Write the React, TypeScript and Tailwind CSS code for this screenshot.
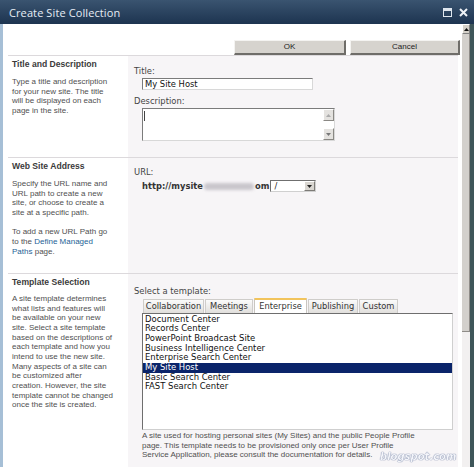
import React from "react";

const VER = "font-['DejaVu_Sans',Verdana,sans-serif]";
const TAH = "font-['Liberation_Sans',Arial,sans-serif]";

function TitleBar() {
  return (
    <div className="h-[24px] flex items-center justify-between bg-gradient-to-b from-[#3a5470] to-[#1d3450] pl-[9px] pr-[6px]">
      <span className="font-['Open_Sans',sans-serif] text-[11px] text-[#e6edf5] leading-none tracking-[0.1px]">
        Create Site Collection
      </span>
      <div className="flex items-center gap-[7px]">
        <svg width="9" height="9" viewBox="0 0 9 9">
          <rect x="0.5" y="0.5" width="8" height="8" fill="none" stroke="#dfe6ee" strokeWidth="1" />
          <rect x="0.5" y="0.5" width="8" height="2.5" fill="#dfe6ee" />
        </svg>
        <svg width="9" height="9" viewBox="0 0 9 9">
          <path d="M1 1 L8 8 M8 1 L1 8" stroke="#eef2f6" strokeWidth="2" />
        </svg>
      </div>
    </div>
  );
}

function Btn({ label, w }: { label: string; w: string }) {
  return (
    <div
      className={`${w} h-[15px] flex items-center justify-center bg-[#d6d3ce] border-t border-l border-t-[#f4f3f1] border-l-[#f4f3f1] border-b-2 border-r-2 border-b-[#6f6d69] border-r-[#6f6d69] ${TAH} text-[8px] text-[#222]`}
    >
      {label}
    </div>
  );
}

function Section({
  h,
  left,
  right,
}: {
  h: string;
  left: React.ReactNode;
  right: React.ReactNode;
}) {
  return (
    <div className={`flex border-t border-[#dcd9dc] ${h} shrink-0`}>
      <div className="w-[120px] bg-white pl-[4px] pr-[3px]">{left}</div>
      <div className="flex-1 bg-[#f7f5f7] pl-[6px]">{right}</div>
    </div>
  );
}

function Heading({ children }: { children: React.ReactNode }) {
  return (
    <div className={`pt-[3px] ${TAH} font-bold text-[8.6px] leading-[10px] text-[#3b3b3b]`}>{children}</div>
  );
}

function Desc({ children, cls = "" }: { children: React.ReactNode; cls?: string }) {
  return <div className={`${TAH} text-[8px] leading-[9.65px] text-[#505050] ${cls}`}>{children}</div>;
}

function Label({ children, cls = "" }: { children: React.ReactNode; cls?: string }) {
  return <div className={`${VER} text-[8.4px] leading-[10px] text-[#444] ${cls}`}>{children}</div>;
}

const items = [
  "Document Center",
  "Records Center",
  "PowerPoint Broadcast Site",
  "Business Intelligence Center",
  "Enterprise Search Center",
  "My Site Host",
  "Basic Search Center",
  "FAST Search Center",
];

const tabs = [
  { t: "Collaboration", w: "w-[61px]" },
  { t: "Meetings", w: "w-[48px]" },
  { t: "Enterprise", w: "w-[53px]", sel: true },
  { t: "Publishing", w: "w-[50px]" },
  { t: "Custom", w: "w-[39px]" },
];

export default function App() {
  return (
    <div className="w-[474px] h-[467px] overflow-hidden relative bg-white flex flex-col">
      <TitleBar />
      <div className="flex flex-1 min-h-0">
        <div className="w-[3px] bg-[#a6bfd6] shrink-0" />
        <div className="flex-1 flex flex-col min-w-0 bg-white">
          <div className="h-[31px] shrink-0 flex items-end justify-end gap-[4px] pr-[2px]">
            <Btn label="OK" w="w-[112px]" />
            <Btn label="Cancel" w="w-[110px]" />
          </div>
          <div className="ml-[5px] mr-[4px] flex flex-col flex-1 min-h-0">
            <Section
              h="h-[102px]"
              left={
                <>
                  <Heading>Title and Description</Heading>
                  <Desc cls="mt-[8px]">
                    Type a title and description
                    <br />
                    for your new site. The title
                    <br />
                    will be displayed on each
                    <br />
                    page in the site.
                  </Desc>
                </>
              }
              right={
                <>
                  <Label cls="pt-[10px]">Title:</Label>
                  <div className="mt-[2px] ml-[8px] w-[171px] h-[12px] bg-white border border-[#7b7b7b] border-b-[#d8d8d8] border-r-[#d8d8d8] flex items-center pl-[2px]">
                    <span className={`${VER} text-[8.4px] leading-none text-[#111]`}>My Site Host</span>
                  </div>
                  <Label cls="mt-[6px]">Description:</Label>
                  <div className="mt-[2px] ml-[8px] w-[193px] h-[33px] flex">
                    <div className="flex-1 bg-white border border-[#7b7b7b] border-b-[#d8d8d8] border-r-0 pl-[1px] pt-[2px]">
                      <div className="w-[1px] h-[10px] bg-[#444]" />
                    </div>
                    <div className="w-[12px] flex flex-col justify-between bg-white border-r border-b border-[#d8d8d8] border-t border-t-[#7b7b7b]">
                      <div className="h-[12px] bg-[#e4e2df] border-t border-l border-white border-b border-r border-b-[#8a8884] border-r-[#8a8884] flex items-center justify-center">
                        <svg width="5" height="3" viewBox="0 0 5 3"><path d="M0 3 L2.5 0 L5 3Z" fill="#aaa" /></svg>
                      </div>
                      <div className="h-[12px] bg-[#e4e2df] border-t border-l border-white border-b border-r border-b-[#8a8884] border-r-[#8a8884] flex items-center justify-center">
                        <svg width="5" height="3" viewBox="0 0 5 3"><path d="M0 0 L2.5 3 L5 0Z" fill="#777" /></svg>
                      </div>
                    </div>
                  </div>
                </>
              }
            />
            <Section
              h="h-[116px]"
              left={
                <>
                  <Heading>Web Site Address</Heading>
                  <Desc cls="mt-[8px]">
                    Specify the URL name and
                    <br />
                    URL path to create a new
                    <br />
                    site, or choose to create a
                    <br />
                    site at a specific path.
                  </Desc>
                  <Desc cls="mt-[9.6px]">
                    To add a new URL Path go
                    <br />
                    to the <span className="text-[#1e5f95]">Define Managed</span>
                    <br />
                    <span className="text-[#1e5f95]">Paths</span> page.
                  </Desc>
                </>
              }
              right={
                <>
                  <Label cls="pt-[9px]">URL:</Label>
                  <div className="mt-[3px] ml-[8px] flex items-center h-[12px]">
                    <span className={`${VER} font-bold text-[8.35px] leading-none text-[#333]`}>http://mysite</span>
                    <span className="w-[50px] h-[7px] mx-[1px] rounded-full bg-[#c9c6cc] blur-[1.5px]" />
                    <span className={`${VER} font-bold text-[8.35px] leading-none text-[#333]`}>om</span>
                    <div className="ml-[1px] w-[46px] h-[12px] bg-white border border-[#6f6f6f] border-b-[#d0d0d0] border-r-[#d0d0d0] flex items-center justify-between pl-[3px]">
                      <span className={`${VER} text-[8.4px] leading-none text-[#222]`}>/</span>
                      <div className="w-[11px] h-[10px] bg-[#d9d6d1] border-t border-l border-white border-b border-r border-b-[#7d7b77] border-r-[#7d7b77] flex items-center justify-center">
                        <svg width="5" height="3" viewBox="0 0 5 3"><path d="M0 0 L2.5 3 L5 0Z" fill="#222" /></svg>
                      </div>
                    </div>
                  </div>
                </>
              }
            />
            <Section
              h="flex-1"
              left={
                <>
                  <Heading>Template Selection</Heading>
                  <Desc cls="mt-[7px]">
                    A site template determines
                    <br />
                    what lists and features will
                    <br />
                    be available on your new
                    <br />
                    site. Select a site template
                    <br />
                    based on the descriptions of
                    <br />
                    each template and how you
                    <br />
                    intend to use the new site.
                    <br />
                    Many aspects of a site can
                    <br />
                    be customized after
                    <br />
                    creation. However, the site
                    <br />
                    template cannot be changed
                    <br />
                    once the site is created.
                  </Desc>
                </>
              }
              right={
                <div className="relative">
                  <Label cls="pt-[12px]">Select a template:</Label>
                  <div className="mt-[2px] ml-[8px] w-[311px]">
                    <div className="flex h-[15px] items-end pl-[1px]">
                      {tabs.map((t) => (
                        <div
                          key={t.t}
                          className={`${t.w} h-[14px] mr-[1px] flex items-center justify-center border border-b-0 rounded-t-[1px] ${VER} text-[8.3px] leading-none text-[#333] ${
                            t.sel
                              ? "bg-white border-[#c9c6c0] border-t-[#f2c45c] border-t-2 h-[15px]"
                              : "bg-gradient-to-b from-[#fbfbfb] to-[#e1dfdc] border-[#cfcdca]"
                          }`}
                        >
                          {t.t}
                        </div>
                      ))}
                    </div>
                    <div className="h-[117px] bg-white border border-[#6e6e6e] border-b-[#cfcfcf] border-r-[#cfcfcf] pt-[0.5px]">
                      {items.map((it) => (
                        <div
                          key={it}
                          className={`h-[9.7px] pl-[2px] ${VER} text-[8.45px] leading-[9.7px] whitespace-nowrap ${
                            it === "My Site Host" ? "bg-[#0a246a] text-white" : "text-[#111]"
                          }`}
                        >
                          {it}
                        </div>
                      ))}
                    </div>
                  </div>
                  <Desc cls="mt-[1px] ml-[8px] text-[#444] whitespace-nowrap">
                    A site used for hosting personal sites (My Sites) and the public People Profile
                    <br />
                    page. This template needs to be provisioned only once per User Profile
                    <br />
                    Service Application, please consult the documentation for details.
                  </Desc>
                  <div className="absolute left-[246px] top-[178px] font-['DejaVu_Sans',sans-serif] font-bold italic text-[10px] leading-none text-[#f4f6fb] [text-shadow:0_0_1px_#5e6f96,0_0_1px_#5e6f96] whitespace-nowrap opacity-90">
                    blogspot.com
                  </div>
                </div>
              }
            />
          </div>
        </div>
        <div className="w-[8px] shrink-0 flex flex-col">
          <div className="h-[10px] bg-[#d4d0c8] border-t border-l border-white border-b border-r border-b-[#808080] border-r-[#808080] flex items-center justify-center">
            <svg width="5" height="3" viewBox="0 0 5 3"><path d="M0 3 L2.5 0 L5 3Z" fill="#111" /></svg>
          </div>
          <div className="h-[298px] bg-[#d3d0cc] border-r border-b border-[#8f8c88]" />
          <div className="flex-1 bg-[#f2f0f0]" />
        </div>
        <div className="w-[4px] shrink-0 bg-[#3e5659]" />
      </div>
    </div>
  );
}
